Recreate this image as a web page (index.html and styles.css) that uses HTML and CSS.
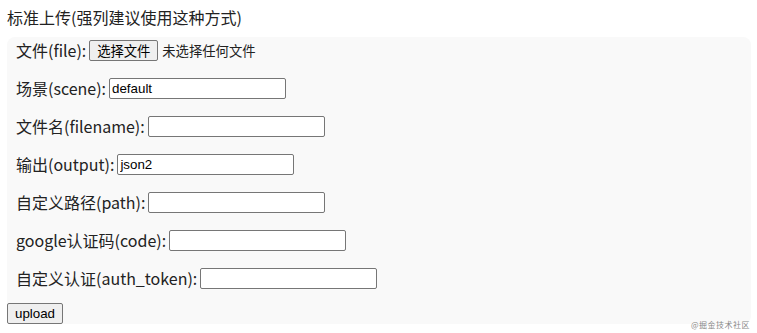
FILE: index.html
```html
<!DOCTYPE html>
<html lang="zh-CN">
<head>
<meta charset="utf-8">
<link rel="stylesheet" href="styles.css">
</head>
<body>
<div class="page">
  <div class="title">标准上传(强列建议使用这种方式)</div>
  <form class="box">
    <div class="row"><span class="label">文件(file):</span><button type="button" class="file-btn">选择文件</button><span class="none">未选择任何文件</span></div>
    <div class="row"><span class="label">场景(scene):</span><input class="field" type="text" value="default"></div>
    <div class="row"><span class="label">文件名(filename):</span><input class="field" type="text"></div>
    <div class="row"><span class="label">输出(output):</span><input class="field" type="text" value="json2"></div>
    <div class="row"><span class="label">自定义路径(path):</span><input class="field" type="text"></div>
    <div class="row"><span class="label">google认证码(code):</span><input class="field" type="text"></div>
    <div class="row"><span class="label">自定义认证(auth_token):</span><input class="field" type="text"></div>
    <button type="button" class="upload">upload</button>
  </form>
  <div class="mark">@掘金技术社区</div>
</div>
</body>
</html>
```
FILE: styles.css
```css
html, body {
  margin: 0;
  padding: 0;
  background: #fff;
}
.page {
  position: relative;
  width: 757px;
  height: 333px;
  padding: 0 6px 0 7px;
  box-sizing: border-box;
  font-family: "Noto Sans CJK SC", "Noto Sans", sans-serif;
  font-size: 16px;
  color: #222;
}
.title {
  height: 37px;
  line-height: 24px;
  padding-top: 5px;
  box-sizing: border-box;
}
.box {
  margin: 0;
  background: #f9f9f9;
  border-radius: 8px;
  padding: 2px 0 0 0;
  height: 287px;
  box-sizing: border-box;
  display: flex;
  flex-direction: column;
  align-items: flex-start;
}
.row {
  display: flex;
  align-items: center;
  height: 22px;
  margin-bottom: 16px;
  padding-left: 9px;
  white-space: nowrap;
}
.label {
  margin-right: 3px;
  line-height: 22px;
}
.file-btn, .upload {
  font-size: 13.33px;
  height: 21px;
  padding: 0;
  border: 1px solid #767676;
  border-radius: 2px;
  background: #efefef;
  color: #000;
  line-height: 19px;
  white-space: nowrap;
}
.file-btn {
  font-family: "Noto Sans CJK SC", sans-serif;
  width: 69px;
  margin-right: 4px;
}
.none {
  font-size: 13.33px;
}
.field {
  width: 177px;
  height: 21px;
  box-sizing: border-box;
  border: 1px solid #767676;
  border-radius: 2px;
  padding: 1px 2px;
  font-family: "Liberation Sans", Arial, sans-serif;
  font-size: 13.33px;
  color: #000;
  background: #fff;
}
.upload {
  font-family: "Liberation Sans", Arial, sans-serif;
  width: 56px;
  margin-top: -2px;
}
.mark {
  position: absolute;
  right: 7px;
  bottom: 3px;
  font-size: 8px;
  color: #888;
  letter-spacing: 0.5px;
}
```
